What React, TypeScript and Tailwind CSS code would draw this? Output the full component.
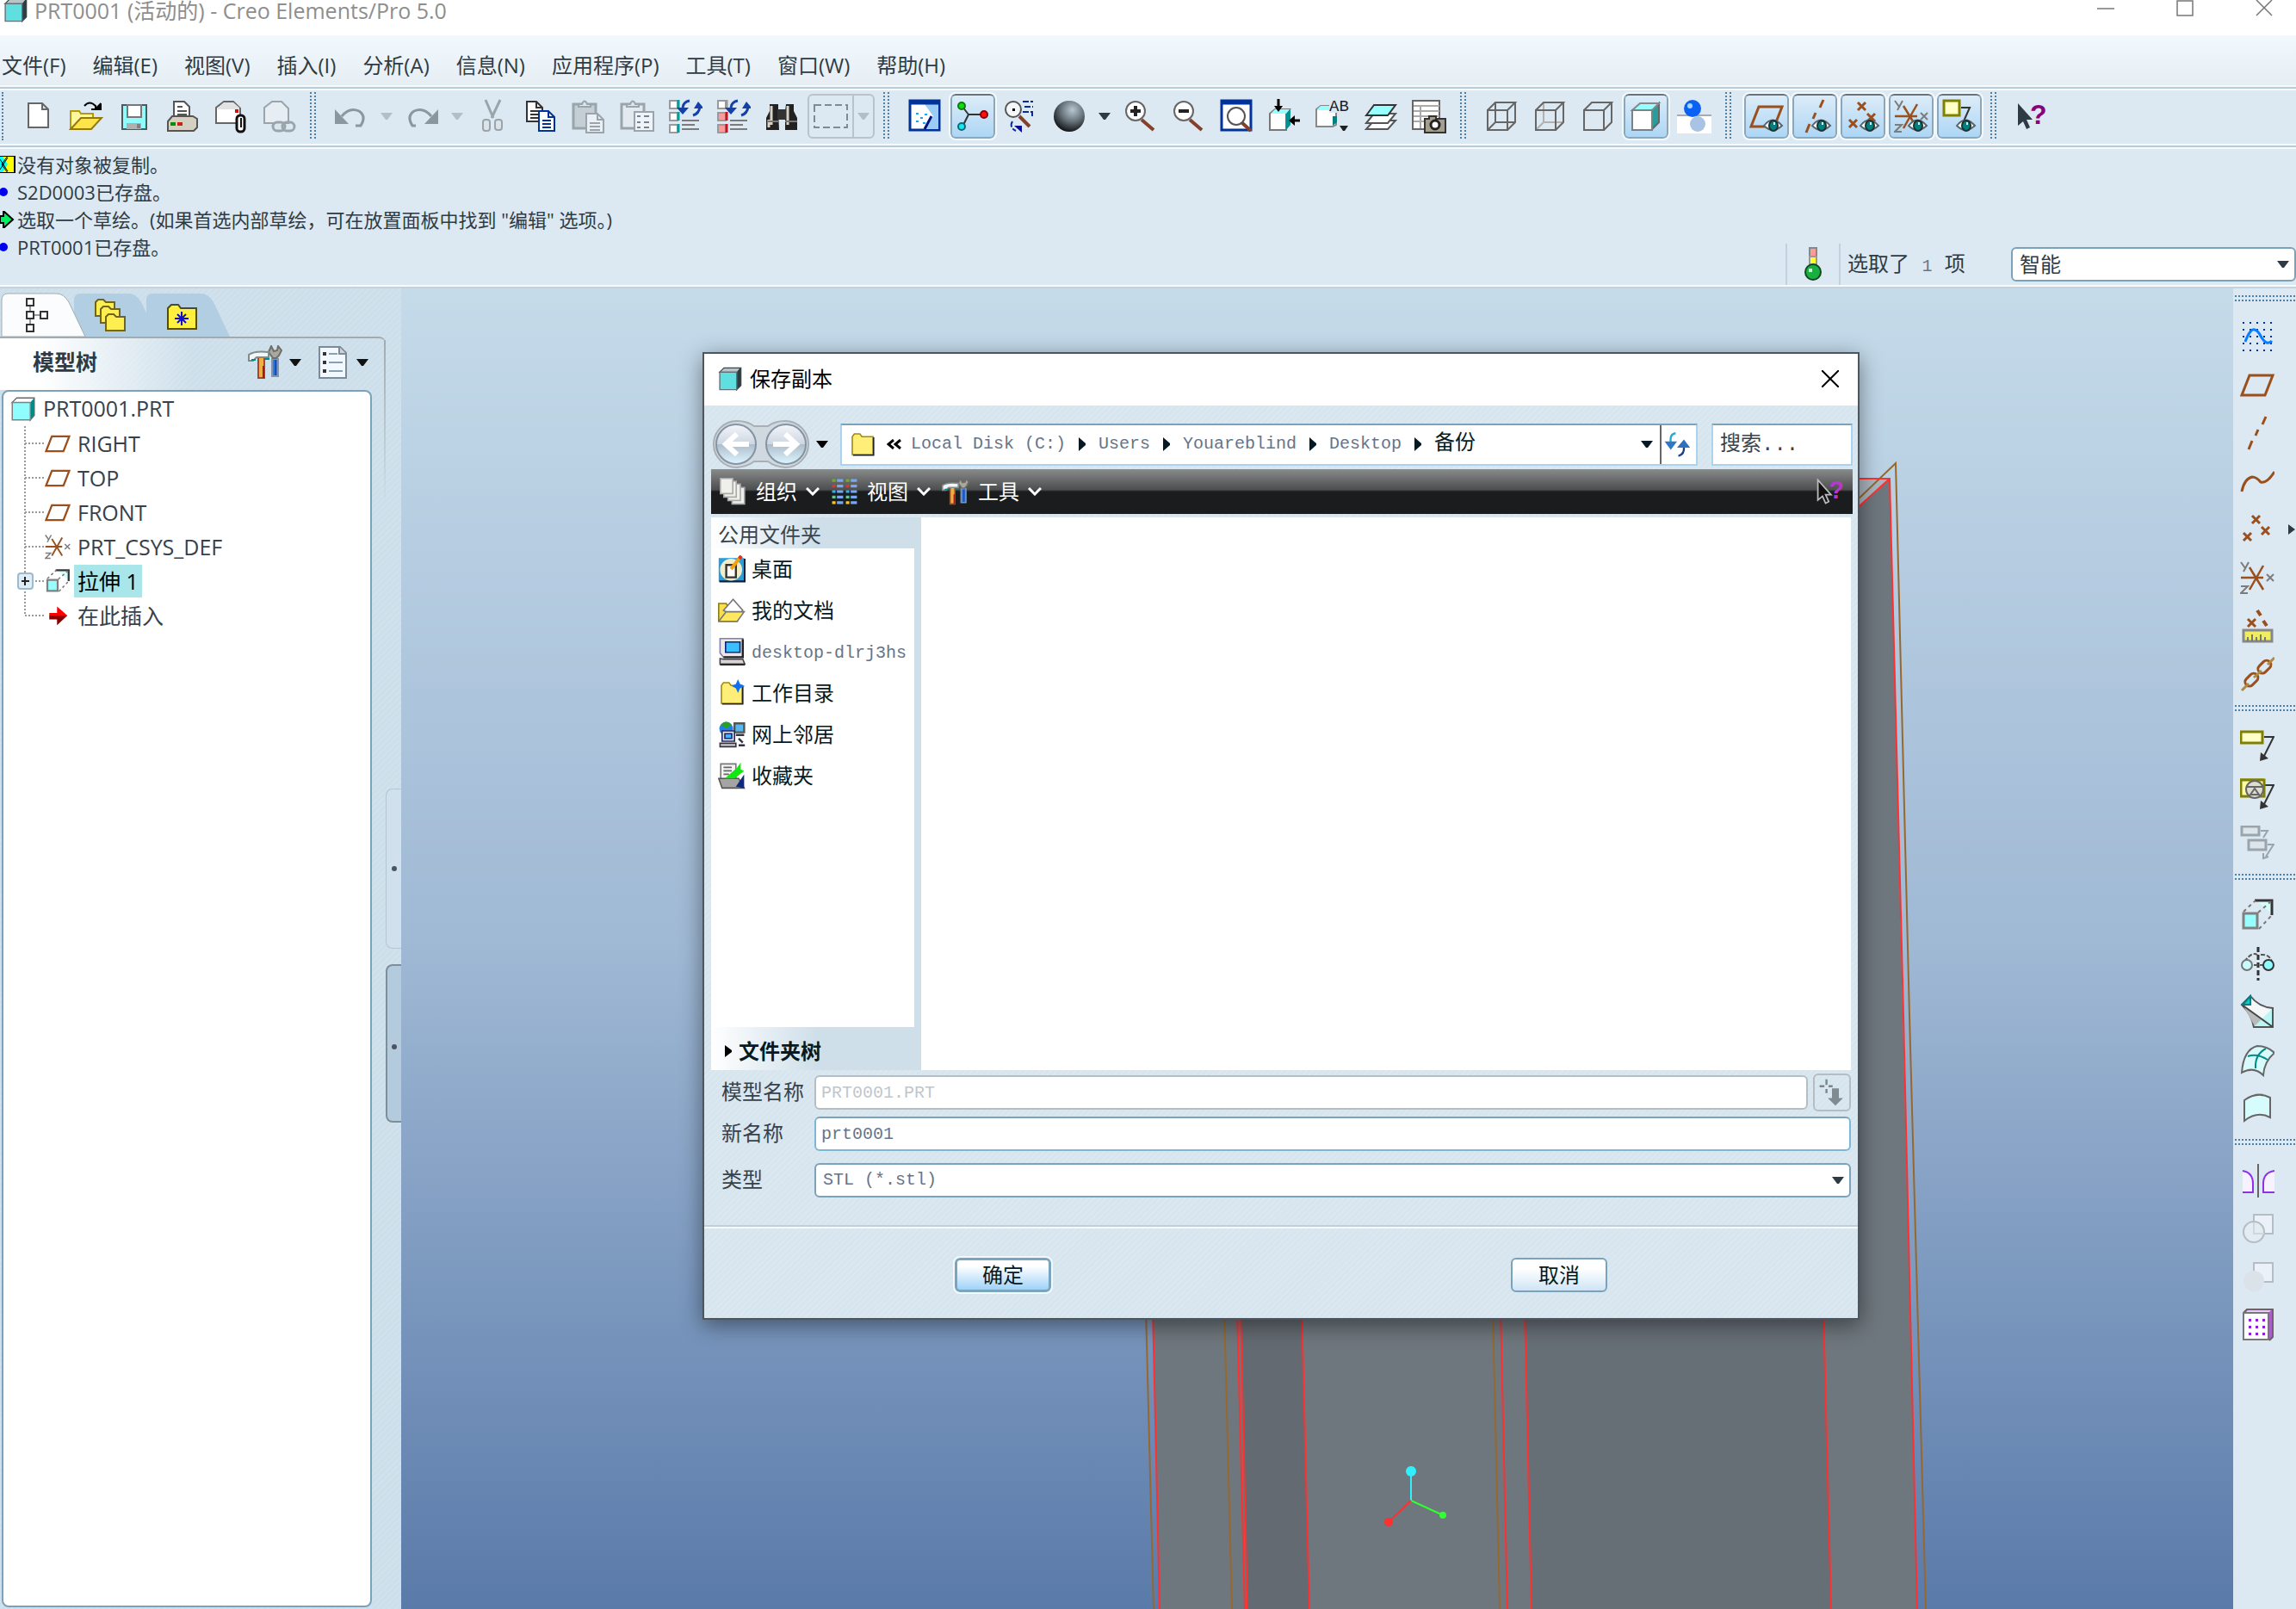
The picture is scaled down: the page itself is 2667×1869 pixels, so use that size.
import { ReactNode, useState } from 'react'

interface IconProps {
  children: ReactNode
  className?: string
}

interface Tool {
  id: string
  label: string
  icon: ReactNode
  pressed?: boolean
  disabled?: boolean
}

const BROWN = '#9a4f1c'
const GRAY = '#666666'
const FADED = '#9aa5ab'

function Icon({ children, className = 'size-10' }: IconProps) {
  return (
    <svg viewBox="0 0 40 40" fill="none" strokeWidth="2" className={`shrink-0 ${className}`} aria-hidden="true">
      {children}
    </svg>
  )
}

function Caret({ color = '#2f3b44' }: { color?: string }) {
  return (
    <svg viewBox="0 0 14 8" className="w-[14px] h-2 shrink-0" aria-hidden="true">
      <path d="M0 0H14L8 8H6Z" fill={color} />
    </svg>
  )
}

// ---- shared glyphs ----

const cube = (
  <>
    <path d="M3 10L10 3H37V30L31 37V10Z" fill="#008b8b" stroke={GRAY} />
    <path d="M4 10L10 4H36L31 10Z" fill="#ffffff" />
    <path d="M3 10H31V37H3Z" fill="#8ffdfd" stroke="#808080" />
  </>
)
// darker cube of the window captions
const captionCube = (
  <>
    <path d="M3 9L10 2H38V31L31 38V9Z" fill="#2c3c40" stroke="#3a4649" />
    <path d="M4 9L10 3H36L31 9Z" fill="#b8c4c8" />
    <path d="M3 9H31V38H3Z" fill="#5fdfdf" stroke="#5f7478" />
  </>
)
const plane = <path d="M11 9H38L29 32H2Z" stroke={BROWN} strokeWidth="3" />
const axis = <path d="M30 1L26 10M21 16L18 23M14 29L10 39" stroke={BROWN} strokeWidth="3" />
const cross = (x: number, y: number) => (
  <path key={`${x}-${y}`} d={`M${x} ${y}l9 9m0 -9l-9 9`} stroke={BROWN} strokeWidth="3" />
)
const points = [cross(14, 4), cross(4, 24), cross(25, 17)]
const csys = (
  <>
    <path d="M1 20H27M11 8L27 34M27 6L11 34" stroke={BROWN} strokeWidth="2.5" />
    <path d="M1 2L6 9M10 2L4 13M31 16L39 24M39 16L31 24M1 30H9L1 38H9" stroke="#7c7c7c" />
  </>
)
const note = (
  <>
    <path d="M1 3H26V16H1Z" fill="#ffffc8" stroke="#808000" strokeWidth="3" />
    <path d="M28 9H39L27 33" stroke="#333" />
    <path d="M24 27L23 37L33 34Z" fill="#333" />
  </>
)
const eye = (
  <>
    <path d="M17 31Q27 18 38 31Q27 41 17 31Z" fill="#ffffff" stroke="#59666b" />
    <ellipse cx="28" cy="31" rx="5" ry="6" fill="#008080" stroke="#20312f" />
    <rect x="28" y="27" width="2" height="3" fill="#c8ffff" />
  </>
)
const extrude = (
  <>
    <path d="M19 3H37V20L32 14L27 10Z" fill="#d6fbfb" />
    <path d="M17 3H37V20" stroke="#333" strokeWidth="3" />
    <path d="M4 16L18 3M21 17L36 4M22 36L37 20" stroke="#777" strokeDasharray="4 4" />
    <path d="M4 18H20V35H4Z" fill="#98ffff" stroke="#808080" strokeWidth="3" />
  </>
)
const magnifier = (sign: ReactNode) => (
  <>
    <path d="M22 24L36 36" stroke="#84402a" strokeWidth="4" />
    <circle cx="15" cy="14" r="11" fill="#ffffff" stroke="#666" />
    {sign}
  </>
)
const hammer = (
  <>
    <path d="M28 16H35V36H28Z" fill="#2f7be0" stroke="#7f95b8" />
    <path d="M32 17V35" stroke="#174fb8" />
    <path d="M27 1L30 7L34 6L35 1L39 6L36 12L33 15H29L24 8Z" fill="#a8a8a0" stroke="#6f6f68" />
    <path d="M12 14H19V38H12Z" fill="#f0b040" stroke="#a8481c" />
    <path d="M18 24V38" stroke="#a01810" />
    <path d="M1 11Q8 6 24 8V14H10L6 18H1Z" fill="#f4f6f6" stroke="#7f8c8c" />
    <path d="M4 17H9M19 16H25" stroke="#008b8b" />
  </>
)
const helpPointer = (fill: string, stroke: string, mark: string) => (
  <>
    <path d="M4 5V31L10 26L14 35L18 33L14 24H21Z" fill={fill} stroke={stroke} />
    <text x="18" y="29" fill={mark} fontSize="32" fontWeight="700" fontFamily="Liberation Sans">?</text>
  </>
)
const sheet = (x: number, y: number, w: number, h: number, color: string, fill = '#ffffff') => (
  <>
    <path d={`M${x} ${y}h${w - 7}l7 7v${h - 7}h-${w}z`} fill={fill} stroke={color} />
    <path d={`M${x + w - 7} ${y}v7h7M${x + 4} ${y + 11}h${w - 8}M${x + 4} ${y + 15}h${w - 8}M${x + 4} ${y + 19}h${w - 8}`} stroke={color} />
  </>
)
const clipboard = (fill: string) => (
  <>
    <path d="M2 6H28V34H2Z" fill={fill} stroke={FADED} strokeWidth="3" />
    <path d="M8 9H22V6H18Q15 -1 12 6H8Z" fill="#dce8f0" stroke={FADED} />
  </>
)
const regenerate = (top: string, rest: string) => (
  <>
    {[1, 15, 29].map((y, i) => (
      <g key={y}>
        <path d={`M2 ${y + 1}h9v9h-9z`} fill={i && rest !== top ? '#ff9a9a' : '#ffffff'} stroke="#9a9a9a" />
        <path d={`M12 ${y}v10`} stroke={i ? rest : top} strokeWidth="3" />
      </g>
    ))}
    <path d="M17 10Q18 3 25 2M37 9Q36 17 29 19" stroke="#1540a8" strokeWidth="3" />
    <path d="M10 10H24L17 18ZM30 11H40V9L35 3Z" fill="#1540a8" />
    <path d="M16 25H36M16 30H31M16 35H36" stroke="#7b7b7b" />
  </>
)
const wireCube = (
  <path d="M4 13H27V36H4ZM4 13L13 4H36L27 13M36 4V27L27 36" stroke={GRAY} strokeWidth="2" />
)
const windowFrame = <path d="M3 2H37V36H3Z" fill="#ffffff" stroke="#003399" strokeWidth="3" />

// ---- toolbar groups ----

const fileTools: Tool[] = [
  { id: 'new', label: '新建', icon: <path d="M9 5H25L32 12V33H9ZM25 5V12H32" fill="#fff" stroke={GRAY} /> },
  {
    id: 'open',
    label: '打开',
    icon: (
      <>
        <path d="M2 35V14H12L14 17H28V22" fill="#fff6a0" stroke="#b59a10" />
        <path d="M2 35L14 22H38L26 35Z" fill="#ffe34a" stroke="#8f7a10" />
        <path d="M18 8Q24 1 31 8V12M26 12H37V5" stroke="#000" />
        <path d="M28 13H37V4Z" fill="#000" />
      </>
    ),
  },
  {
    id: 'save',
    label: '保存',
    icon: (
      <>
        <path d="M6 7H34V35H6Z" fill="#8ffdfd" stroke="#4d5a5a" />
        <path d="M12 7H28V21H12Z" fill="#fff" stroke="#777" />
        <path d="M11 28H28V35H11Z" fill="#b0b0b0" />
        <path d="M23 29H27V34H23Z" fill="#808080" />
      </>
    ),
  },
  {
    id: 'print',
    label: '打印',
    icon: (
      <>
        <path d="M10 20V3H22L28 9V20" fill="#fff" stroke="#555" />
        <path d="M14 9H20M14 14H25M14 18H25" stroke="#555" />
        <path d="M3 26L8 20H32L37 23V33L33 37H3Z" fill="#d5d1c2" stroke="#555" />
        <path d="M6 29H12" stroke="#0a8a0a" strokeWidth="4" />
        <path d="M14 29H20" stroke="#cf2010" strokeWidth="4" />
      </>
    ),
  },
  {
    id: 'mail',
    label: '发送邮件',
    icon: (
      <>
        <path d="M3 10L12 3H23L31 11V28H3Z" fill="#fff" stroke="#666" />
        <path d="M4 12H30V10L23 4H12Z" fill="#e2e2e2" />
        <path d="M25 12H29V16H25Z" fill="#d01010" />
        <rect x="27" y="19" width="9" height="19" rx="4" fill="#fff" stroke="#111" strokeWidth="3" />
        <path d="M32 22V33" stroke="#111" />
      </>
    ),
  },
  {
    id: 'mail-link',
    label: '发送链接',
    disabled: true,
    icon: (
      <>
        <path d="M3 10L12 3H23L31 11V28H3Z" fill="#e6edf3" stroke={FADED} />
        <rect x="13" y="27" width="14" height="10" rx="5" fill="#dce6ee" stroke={FADED} strokeWidth="3" />
        <rect x="24" y="27" width="14" height="10" rx="5" stroke={FADED} strokeWidth="3" />
      </>
    ),
  },
]

const editTools: Tool[] = [
  {
    id: 'cut',
    label: '剪切',
    disabled: true,
    icon: (
      <>
        <path d="M12 1L21 22M29 1L19 22" stroke={FADED} strokeWidth="3" />
        <rect x="9" y="24" width="8" height="13" rx="3" stroke={FADED} fill="#dce4ea" />
        <rect x="23" y="24" width="8" height="12" rx="3" stroke={FADED} fill="#dce4ea" />
      </>
    ),
  },
  {
    id: 'copy',
    label: '复制',
    icon: (
      <>
        {sheet(4, 3, 18, 23, '#333')}
        {sheet(18, 14, 18, 23, '#003399')}
      </>
    ),
  },
  { id: 'paste', label: '粘贴', disabled: true, icon: <>{clipboard('#c5ced4')}{sheet(17, 17, 20, 22, FADED, '#eaf0f5')}</> },
  {
    id: 'paste-special',
    label: '选择性粘贴',
    disabled: true,
    icon: (
      <>
        {clipboard('#e2eaf0')}
        <path d="M17 15H39V37H17Z" fill="#eef4fa" stroke={FADED} />
        <path d="M20 20H24M20 27H24M20 33H24M28 20H34M28 27H34M28 33H34" stroke="#78848b" />
      </>
    ),
  },
  { id: 'regen', label: '再生', icon: regenerate('#00a0a0', '#00a0a0') },
  { id: 'regen-mgr', label: '再生管理器', icon: regenerate('#999999', '#d01020') },
  {
    id: 'find',
    label: '查找',
    icon: (
      <>
        <path d="M6 6H16V14L17 36H2V22L6 14ZM25 6H34V14L38 22V36H24V14Z" fill="#222" />
        <path d="M8 8V30M5 24V33M27 8V30" stroke="#d8d4c4" strokeWidth="3" />
        <path d="M15 12H25V24H15Z" fill="#333" />
        <path d="M3 26H17M24 26H38" stroke="#777" />
      </>
    ),
  },
]

const viewTools: Tool[] = [
  {
    id: 'repaint',
    label: '重画',
    icon: (
      <>
        {windowFrame}
        <path d="M20 6H36V35H21L30 20Z" fill="#9bcdf4" />
        <path d="M2 4H38" stroke="#003399" strokeWidth="5" />
        <path d="M28 20L20 35" stroke="#00157f" strokeWidth="3" />
        <path d="M10 17H13M15 22H18M10 26H13M20 18H23M18 28H21" stroke="#1ba4f0" />
      </>
    ),
  },
  {
    id: 'spin-center',
    label: '旋转中心',
    pressed: true,
    icon: (
      <>
        <path d="M8 9L15 18L8 32M15 18H32" stroke="#333" />
        <circle cx="7" cy="8" r="4" fill="#0be00b" stroke="#117711" />
        <circle cx="7" cy="32" r="4" fill="#17e8f5" stroke="#086a73" />
        <circle cx="33" cy="18" r="4" fill="#ff1010" stroke="#8a0000" />
      </>
    ),
  },
  {
    id: 'orient-mode',
    label: '定向模式',
    icon: (
      <>
        <path d="M18 20L30 32" stroke="#84402a" strokeWidth="4" />
        <circle cx="11" cy="12" r="9" fill="#f4f8fb" stroke="#555" />
        <rect x="10" y="11" width="3" height="3" fill="#000" />
        <path d="M22 3H34M24 9H34M22 15H33V21M10 26Q6 33 14 37" stroke="#0a2a98" strokeDasharray="7 2" />
        <path d="M12 31H21V39Z" fill="#0a0a98" />
      </>
    ),
  },
  {
    id: 'appearance',
    label: '外观库',
    icon: (
      <>
        <defs>
          <radialGradient id="ball" cx="0.6" cy="0.3" r="0.7">
            <stop offset="0" stopColor="#b9c6d0" />
            <stop offset="0.5" stopColor="#6c7880" />
            <stop offset="1" stopColor="#15181b" />
          </radialGradient>
        </defs>
        <circle cx="20" cy="20" r="18" fill="url(#ball)" />
      </>
    ),
  },
]

const zoomTools: Tool[] = [
  { id: 'zoom-in', label: '放大', icon: magnifier(<path d="M9 14H21M15 8V20" stroke="#222" strokeWidth="4" />) },
  { id: 'zoom-out', label: '缩小', icon: magnifier(<path d="M9 14H21" stroke="#222" strokeWidth="4" />) },
  {
    id: 'refit',
    label: '重新调整',
    icon: (
      <>
        {windowFrame}
        <path d="M2 4H38" stroke="#003399" strokeWidth="5" />
        <path d="M25 26L37 37" stroke="#84402a" strokeWidth="4" />
        <circle cx="20" cy="20" r="10" fill="#fff" stroke="#555" />
      </>
    ),
  },
  {
    id: 'reorient',
    label: '重定向',
    icon: (
      <>
        <path d="M3 17L9 12H26L22 17V36H3Z" fill="#fff" stroke="#777" />
        <path d="M4 17L9 12H26L22 17Z" fill="#98ffff" />
        <path d="M22 17L27 12V30L22 36Z" fill="#009090" />
        <path d="M13 0V10M28 25H38" stroke="#000" strokeWidth="3" />
        <path d="M8 8H18L13 15ZM32 19V31L25 25Z" fill="#000" />
      </>
    ),
  },
  {
    id: 'saved-views',
    label: '已命名视图',
    icon: (
      <>
        <path d="M1 12L6 8H24V30L20 32H1Z" fill="#fff" stroke="#888" />
        <path d="M2 12L6 8H20L18 13H2Z" fill="#98ffff" />
        <path d="M20 20V31L25 27V20Z" fill="#008080" />
        <path d="M16 0H38V16H16Z" fill="#dce9f2" />
        <text x="16" y="14" fill="#222" fontSize="19" fontFamily="Liberation Mono" stroke="none">AB</text>
        <path d="M28 31H38L34 37H32Z" fill="#222" />
      </>
    ),
  },
  {
    id: 'layers',
    label: '层',
    icon: (
      <>
        <path d="M3 35L12 25H37L28 35Z" fill="#fff" stroke="#555" />
        <path d="M3 28L12 17H37L28 28Z" fill="#fff" stroke="#555" />
        <path d="M3 19L12 7H37L28 19Z" fill="#98ffff" stroke="#333" />
      </>
    ),
  },
  {
    id: 'view-manager',
    label: '视图管理器',
    icon: (
      <>
        <path d="M1 2H32V35H1Z" fill="#fff" stroke="#666" />
        <path d="M2 8H32M2 14H32M2 20H32M2 26H16M10 8V34" stroke="#aaa" />
        <path d="M15 23H20V20H28V23H39V39H15Z" fill="#a49f8c" stroke="#333" />
        <circle cx="27" cy="30" r="5" fill="#fff" stroke="#222" strokeWidth="3" />
      </>
    ),
  },
]

const displayTools: Tool[] = [
  { id: 'wireframe', label: '线框', icon: <>{wireCube}<path d="M13 4V27H36M13 27L4 36" stroke={GRAY} /></> },
  { id: 'hidden-line', label: '隐藏线', icon: <><path d="M13 4V27H36M13 27L4 36" stroke="#b4b0ae" />{wireCube}</> },
  { id: 'no-hidden', label: '消隐', icon: wireCube },
  {
    id: 'shading',
    label: '着色',
    pressed: true,
    icon: (
      <>
        <path d="M27 13L35 5V27L27 35Z" fill="#2a9c9c" stroke="#666" />
        <path d="M4 13L13 5H35L27 13Z" fill="#98ffff" stroke="#888" />
        <path d="M4 13H27V36H4Z" fill="#fff" stroke="#808080" />
      </>
    ),
  },
  {
    id: 'realism',
    label: '增强的真实感',
    icon: (
      <>
        <path d="M0 19H40V40H0Z" fill="#fff" />
        <path d="M0 19H40" stroke="#aaa" />
        <circle cx="24" cy="29" r="9" fill="#a9c3e4" />
        <circle cx="18" cy="11" r="10" fill="#0a62f5" />
        <circle cx="15" cy="8" r="3" fill="#a8d8ff" />
      </>
    ),
  },
]

const datumTools: Tool[] = [
  { id: 'planes', label: '平面显示', pressed: true, icon: <>{plane}{eye}</> },
  { id: 'axes', label: '轴显示', pressed: true, icon: <>{axis}{eye}</> },
  { id: 'points', label: '点显示', pressed: true, icon: <>{points}{eye}</> },
  { id: 'csys', label: '坐标系显示', pressed: true, icon: <>{csys}{eye}</> },
  {
    id: 'notes',
    label: '注释显示',
    pressed: true,
    icon: (
      <>
        <path d="M2 2H20V19H2Z" fill="#ffffc8" stroke="#808000" strokeWidth="3" />
        <path d="M22 10H32L24 28" stroke="#333" />
        {eye}
      </>
    ),
  },
]

// ---- feature toolbar on the right edge ----

const gridDots = [3, 11, 19, 27, 35]
const sideGroups: Tool[][] = [
  [
    {
      id: 'sketch',
      label: '草绘',
      icon: (
        <>
          {gridDots.map((x) => gridDots.map((y) => <rect key={`${x}-${y}`} x={x} y={y} width="2" height="2" fill="#003399" />))}
          <path d="M6 26Q12 10 17 12Q21 13 25 21Q31 31 37 25" stroke="#0a7dff" strokeWidth="3" />
        </>
      ),
    },
    { id: 'plane', label: '平面', icon: plane },
    { id: 'axis', label: '轴', icon: axis },
    { id: 'curve', label: '曲线', icon: <path d="M2 32Q5 17 14 15Q19 15 24 21Q31 23 40 9" stroke={BROWN} strokeWidth="3" /> },
    { id: 'point', label: '点', icon: points },
    { id: 'csys', label: '坐标系', icon: csys },
    {
      id: 'field',
      label: '分析',
      icon: (
        <>
          {cross(9, 12)}
          <path d="M20 2L24 8M27 14L31 20" stroke={BROWN} strokeWidth="4" />
          <path d="M4 25H37V38H4Z" fill="#eeee60" stroke="#888" strokeWidth="3" />
          <path d="M9 38V33M14 38V30M19 38V33M24 38V30M29 38V33" stroke="#777" />
        </>
      ),
    },
    {
      id: 'reference',
      label: '参照',
      icon: (
        <>
          <rect x="-8" y="-5" width="17" height="10" rx="5" transform="translate(13 27) rotate(-45)" stroke={BROWN} strokeWidth="3" />
          <rect x="-8" y="-5" width="17" height="10" rx="5" transform="translate(28 12) rotate(-45)" stroke={BROWN} strokeWidth="3" />
          <path d="M2 39L10 31M16 24L25 16M32 9L40 1" stroke="#b08a40" strokeWidth="3" />
        </>
      ),
    },
  ],
  [
    { id: 'note', label: '注释', icon: note },
    {
      id: 'note-stamp',
      label: '传播注释',
      icon: (
        <>
          {note}
          <path d="M1 3H28V22H1Z" fill="#ffffa8" stroke="#808000" strokeWidth="3" />
          <circle cx="17" cy="14" r="10" fill="#dedbd0" stroke="#666" />
          <path d="M7 11H27M12 20L17 13L22 20Z" stroke="#666" />
        </>
      ),
    },
    {
      id: 'note-copy',
      label: '复制注释',
      disabled: true,
      icon: (
        <>
          <path d="M2 1H22V11H2ZM10 17H30V28H10Z" fill="#dce5ec" stroke={FADED} strokeWidth="3" />
          <path d="M24 6H32L27 14M32 22H39L30 36M27 32V38L33 36" stroke={FADED} />
        </>
      ),
    },
  ],
  [
    { id: 'extrude', label: '拉伸', icon: extrude },
    {
      id: 'revolve',
      label: '旋转',
      icon: (
        <>
          <path d="M21 1V40" stroke="#333" strokeWidth="3" strokeDasharray="6 3" />
          <path d="M5 18Q14 6 20 10M24 10Q34 9 37 18M16 22H28" stroke="#555" strokeDasharray="5 2" />
          <circle cx="8" cy="22" r="6" fill="#c8fbfb" stroke="#777" />
          <circle cx="33" cy="22" r="6" fill="#8ffdfd" stroke="#333" />
        </>
      ),
    },
    {
      id: 'sweep',
      label: '扫描混合',
      icon: (
        <>
          <path d="M2 12L12 2Q22 15 38 16V38H16Q14 24 2 12Z" fill="#f4f8f8" stroke="#555" />
          <path d="M3 12L17 37L25 30Z" fill="#b8bbbb" />
          <path d="M37 17L17 37H37Z" fill="#baf6f6" />
          <path d="M2 12L38 38" stroke="#444" />
          <path d="M3 12L12 2V12Z" fill="#10c8c8" stroke="#087c7c" />
        </>
      ),
    },
    {
      id: 'boundary',
      label: '边界混合',
      icon: (
        <>
          <path d="M2 35Q4 8 20 4Q32 4 40 12Q28 22 27 38Q16 27 2 35Z" fill="#d8fafa" stroke="#666" />
          <path d="M30 7Q17 14 18 30M9 16Q20 12 32 20" stroke="#008b8b" />
        </>
      ),
    },
    {
      id: 'style',
      label: '造型',
      icon: <path d="M5 35V11Q20 0 35 8V31Q20 23 5 35Z" fill="#d6fcfc" stroke="#666" />,
    },
  ],
  [
    {
      id: 'mirror',
      label: '镜像',
      icon: (
        <>
          <path d="M21 1V40" stroke="#666" />
          <path d="M3 9Q15 11 15 24V34H3M40 9Q27 11 27 24V34H40" fill="#f6f2ff" stroke="#9030e8" />
        </>
      ),
    },
    {
      id: 'merge',
      label: '合并',
      disabled: true,
      icon: (
        <>
          <path d="M16 4H38V26H16Z" fill="#eaf1f8" stroke="#b4bdc4" />
          <circle cx="16" cy="24" r="12" fill="#e4ecf3" stroke="#b4bdc4" />
          <path d="M16 13V26H28" stroke="#cfd7dd" />
        </>
      ),
    },
    {
      id: 'trim',
      label: '修剪',
      disabled: true,
      icon: (
        <>
          <path d="M16 4H38V26H16Z" fill="#eaf1f8" stroke="#b4bdc4" />
          <circle cx="16" cy="25" r="12" fill="#dbe2e9" />
        </>
      ),
    },
    {
      id: 'pattern',
      label: '阵列',
      icon: (
        <>
          <path d="M4 6L8 2H38V34L34 38" fill="#a85fc8" stroke="#666" />
          <path d="M6 6L9 3H36L33 6Z" fill="#f0c8ff" />
          <path d="M4 6H33V37H4Z" fill="#fff" stroke="#777" />
          {[10, 18, 26].map((x) => [13, 21, 29].map((y) => <rect key={`${x}-${y}`} x={x} y={y} width="3" height="3" fill="#9020d8" />))}
        </>
      ),
    },
  ],
]

const menus = ['文件(F)', '编辑(E)', '视图(V)', '插入(I)', '分析(A)', '信息(N)', '应用程序(P)', '工具(T)', '窗口(W)', '帮助(H)']

const treeNodes = [
  { name: 'RIGHT', icon: plane },
  { name: 'TOP', icon: plane },
  { name: 'FRONT', icon: plane },
  { name: 'PRT_CSYS_DEF', icon: csys },
  { name: '拉伸 1', icon: extrude, expandable: true, selected: true },
  { name: '在此插入', icon: <><path d="M7 16H19V6L35 20H7Z" fill="#f00" /><path d="M7 20H35L19 35V26H7Z" fill="#8a0000" /></> },
]

const folder = (
  <>
    <path d="M5 35V9L8 5H16L19 9H35V35Z" fill="#ffee78" stroke="#a08a10" />
    <path d="M36 10V36H6" stroke="#222" strokeWidth="2" />
  </>
)

const places = [
  {
    name: '桌面',
    icon: (
      <>
        <path d="M1 4H38V38H1Z" fill="#2a9ed8" />
        <path d="M2 38H39V5" stroke="#0a2040" strokeWidth="3" />
        <circle cx="19" cy="21" r="16" fill="#f2edc8" />
        <path d="M12 14H26V32H12Z" fill="#fff" stroke="#333" strokeWidth="3" />
        <path d="M19 20L33 2" stroke="#f0a010" strokeWidth="5" />
        <path d="M31 5L34 1" stroke="#e03020" strokeWidth="5" />
      </>
    ),
  },
  {
    name: '我的文档',
    icon: (
      <>
        <path d="M1 36V10H12L14 14H28V36Z" fill="#f8e050" stroke="#8a7a20" />
        <path d="M8 20L22 4L36 20L26 30Z" fill="#fff" stroke="#777" />
        <path d="M1 36L12 22H38L28 36Z" fill="#ffe860" stroke="#777" />
      </>
    ),
  },
  {
    name: 'desktop-dlrj3hs',
    mono: true,
    icon: (
      <>
        <path d="M3 1H36V28H8L3 22Z" fill="#ece8e0" stroke="#8080b0" />
        <path d="M36 2V28H8" stroke="#222" strokeWidth="3" />
        <path d="M11 6H32V21H11Z" fill="#38c0ff" stroke="#102080" />
        <path d="M8 31H36L39 38H3V30Z" fill="#d8d4d8" stroke="#444" />
        <path d="M3 39H39" stroke="#222" />
      </>
    ),
  },
  { name: '工作目录', icon: <>{folder}<path d="M29 0L32 7L39 10L32 13L29 20L26 13L20 10L26 7Z" fill="#1070f0" /></> },
  {
    name: '网上邻居',
    icon: (
      <>
        <circle cx="12" cy="12" r="10" fill="#2080e8" />
        <path d="M4 6Q12 -2 20 6L12 12Z" fill="#28a020" />
        <path d="M24 4H38V17H24Z" fill="#58b8f0" stroke="#555" strokeWidth="3" />
        <path d="M6 15H24V30H6Z" fill="#e8e4dc" stroke="#202868" />
        <path d="M10 19H20V26H10Z" fill="#38b8f8" stroke="#102080" />
        <path d="M3 33H26V38H3Z" fill="#d0ccc8" stroke="#334" />
        <path d="M26 21H38M30 26L36 32M30 36H39" stroke="#334" strokeWidth="3" />
      </>
    ),
  },
  {
    name: '收藏夹',
    icon: (
      <>
        <path d="M4 3H26V30H4Z" fill="#f4f4f4" stroke="#777" />
        <path d="M8 8H20M8 13H20M8 18H16" stroke="#666" />
        <path d="M1 24H30L38 38H6Z" fill="#a4a4a4" stroke="#555" />
        <path d="M26 36L38 18V38Z" fill="#102880" />
        <path d="M10 24L28 8L33 1V11L38 13L24 24Z" fill="#10e810" />
      </>
    ),
  },
]

function ToolButton({ tool }: { tool: Tool }) {
  const look = tool.pressed
    ? 'border-2 border-[#8fa6b8] border-t-[#66747f] outline-2 outline-[#f2f9fd] bg-linear-to-b from-[#dcecf8] to-[#add6f5]'
    : ''
  return (
    <button
      type="button"
      aria-label={tool.label}
      title={tool.label}
      disabled={tool.disabled}
      className={`mx-0.5 flex size-[52px] shrink-0 items-center justify-center rounded-md ${look}`}
    >
      <Icon>{tool.icon}</Icon>
    </button>
  )
}

function Grip({ horizontal }: { horizontal?: boolean }) {
  return horizontal ? (
    <div className="mt-2 mb-3 ml-0.5 flex h-2 flex-col gap-[3px]">
      <div className="h-[2px] bg-[repeating-linear-gradient(90deg,#4f7fa3_0px,#4f7fa3_2px,transparent_2px,transparent_4px)]" />
      <div className="h-[2px] bg-[repeating-linear-gradient(90deg,#4f7fa3_0px,#4f7fa3_2px,transparent_2px,transparent_4px)]" />
    </div>
  ) : (
    <div className="ml-2 mr-3 flex h-14 w-2 shrink-0 gap-[3px]">
      <div className="w-[2px] bg-[repeating-linear-gradient(180deg,#4f7fa3_0px,#4f7fa3_2px,transparent_2px,transparent_4px)]" />
      <div className="w-[2px] bg-[repeating-linear-gradient(180deg,#4f7fa3_0px,#4f7fa3_2px,transparent_2px,transparent_4px)]" />
    </div>
  )
}

function Rule() {
  return <div className="h-1.5 shrink-0 border-y-2 border-[#f6fafd] bg-[#b7ccdb]" />
}

function TitleBar() {
  return (
    <header className="flex h-[41px] shrink-0 items-start justify-between bg-white pr-[27px]">
      <div className="flex h-6 items-center">
        <Icon className="ml-1 size-7">{captionCube}</Icon>
        <h1 className="ml-2 text-[25px] leading-6 text-[#8e8e8e]">PRT0001 (活动的) - Creo Elements/Pro 5.0</h1>
      </div>
      <div className="flex gap-[72px] text-[#777]">
        {[
          { label: '最小化', d: 'M0 10H20' },
          { label: '最大化', d: 'M1 1H19V18H1Z' },
          { label: '关闭', d: 'M1 0L19 18M19 0L1 18' },
        ].map((b) => (
          <button key={b.label} type="button" aria-label={b.label}>
            <svg viewBox="0 0 20 20" fill="none" stroke="currentColor" strokeWidth="1.5" className="size-5">
              <path d={b.d} />
            </svg>
          </button>
        ))}
      </div>
    </header>
  )
}

function MainToolbar() {
  return (
    <div className="flex h-[62px] shrink-0 items-center pb-0.5">
      <div className="mr-3 h-14 w-1 border-r-2 border-dotted border-[#4f7fa3]" />
      {fileTools.map((tool) => <ToolButton key={tool.id} tool={tool} />)}
      <Grip />
      <button type="button" aria-label="撤消" disabled className="flex w-14 justify-center">
        <Icon><path d="M9 20Q18 9 29 14Q38 20 31 31H25" stroke="#8b979e" strokeWidth="3" /><path d="M1 12V29H17Z" fill="#8b979e" /></Icon>
      </button>
      <button type="button" aria-label="撤消列表" disabled className="flex w-[26px] justify-center"><Caret color="#b3bfc7" /></button>
      <button type="button" aria-label="重做" disabled className="flex w-14 justify-center">
        <Icon><path d="M31 20Q22 9 11 14Q2 20 9 31H13" stroke="#8b979e" strokeWidth="3" /><path d="M39 12V29H23Z" fill="#8b979e" /></Icon>
      </button>
      <button type="button" aria-label="重做列表" disabled className="flex w-[26px] justify-center"><Caret color="#b3bfc7" /></button>
      {editTools.map((tool) => <ToolButton key={tool.id} tool={tool} />)}
      <button type="button" aria-label="选取框" disabled className="mx-0.5 flex h-[52px] w-[78px] shrink-0 items-center rounded-md border-2 border-[#b9c3ca]">
        <span className="flex h-full w-[52px] items-center justify-center border-r-2 border-[#b9c3ca]">
          <Icon><path d="M1 7H39V33H1Z" stroke="#7f8b92" strokeDasharray="8 4" /></Icon>
        </span>
        <span className="flex flex-1 justify-center"><Caret color="#b3bfc7" /></span>
      </button>
      <Grip />
      {viewTools.map((tool) => <ToolButton key={tool.id} tool={tool} />)}
      <button type="button" aria-label="外观列表" className="flex w-[26px] justify-center"><Caret /></button>
      {zoomTools.map((tool) => <ToolButton key={tool.id} tool={tool} />)}
      <Grip />
      {displayTools.map((tool) => <ToolButton key={tool.id} tool={tool} />)}
      <Grip />
      {datumTools.map((tool) => <ToolButton key={tool.id} tool={tool} />)}
      <Grip />
      <ToolButton tool={{ id: 'help', label: '上下文帮助', icon: helpPointer('#2f3b44', 'none', '#86007f') }} />
    </div>
  )
}

function MessageArea() {
  const bullet = <circle cx="4" cy="10" r="5" fill="#0000f0" />
  const messages = [
    { text: '没有对象被复制。', icon: <><path d="M0 0H17V20H0Z" fill="#ffff00" stroke="#000" strokeWidth="2" /><path d="M0 1H3L9 10L3 19H0Z" fill="#00ffff" /><path d="M9 0L2 10L9 20M0 4L9 18M0 16L9 2" fill="none" stroke="#000" /></> },
    { text: 'S2D0003已存盘。', icon: bullet },
    { text: '选取一个草绘。(如果首选内部草绘，可在放置面板中找到 "编辑" 选项。)', icon: <path d="M0 6H4V0L15 10L4 20V14H0Z" fill="#00f060" stroke="#000" strokeWidth="2" /> },
    { text: 'PRT0001已存盘。', icon: bullet },
  ]
  return (
    <div className="flex h-[158px] shrink-0 justify-between">
      <ul className="pt-0.5">
        {messages.map((m) => (
          <li key={m.text} className="flex h-8 items-center gap-0.5 text-[22px]">
            <svg viewBox="0 0 18 20" className="h-5 w-[18px]" aria-hidden="true">{m.icon}</svg>
            <span className="whitespace-nowrap">{m.text}</span>
          </li>
        ))}
      </ul>
      <div className="flex items-center self-end">
        <div className="flex h-12 w-16 items-center justify-center border-x-2 border-[#c3d1dc]">
          <Icon>
            <path d="M16 1H24V11H16Z" fill="#ff9a9a" stroke="#888" />
            <path d="M16 11H24V20H16Z" fill="#ffff30" stroke="#999" />
            <circle cx="20" cy="29" r="9" fill="#18b040" stroke="#124a20" />
            <path d="M15 25H19V29H15Z" fill="#c8ffd0" />
          </Icon>
        </div>
        <p className="ml-2 w-[190px] pt-1 font-['Liberation_Mono','Noto_Sans_CJK_SC',monospace] text-2xl">
          选取了 <span className="text-xl text-[#66758a]">1</span> 项
        </p>
        <Dropdown label="选择过滤器" value="智能" className="h-10 w-[331px] text-2xl" />
      </div>
    </div>
  )
}

function Dropdown({ id, label, value, className }: { id?: string; label?: string; value: string; className: string }) {
  return (
    <div className={`relative ${className}`}>
      <select id={id} aria-label={label} className="size-full appearance-none rounded-md border-2 border-[#7aa2ba] bg-white pl-2">
        <option>{value}</option>
      </select>
      <span className="pointer-events-none absolute inset-y-0 right-2 flex items-center"><Caret /></span>
    </div>
  )
}

function ModelTree() {
  const tabs = [
    {
      label: '模型树',
      icon: (
        <g transform="translate(13 5)" fill="#fff" stroke="#333" strokeWidth="2">
          <path d="M20 9V16M20 24V31M24 20H32" stroke="#999" />
          <path d="M16 1H24V9H16ZM16 16H24V24H16ZM16 31H24V39H16ZM32 16H40V24H32Z" />
        </g>
      ),
    },
    {
      label: '文件夹浏览器',
      icon: (
        <g transform="translate(21 5)" fill="#ffee50" stroke="#6f6420" strokeWidth="2">
          <path d="M4 21V5L7 2H13L16 5H26V21Z" />
          <path d="M10 29V13L13 10H19L22 13H32V29Z" />
          <path d="M16 38V22L19 19H25L28 22H38V38Z" />
        </g>
      ),
    },
    {
      label: '收藏夹',
      icon: (
        <g transform="translate(21 5)" strokeWidth="2">
          <path d="M4 36V12L8 8H16L19 12H37V36Z" fill="#fff040" stroke="#4f4a20" />
          <path d="M20 16V32M12 24H28M15 19L25 29M25 19L15 29" stroke="#1010d0" />
        </g>
      ),
    },
  ]
  return (
    <aside className="flex w-[466px] shrink-0 bg-[repeating-linear-gradient(135deg,#cddfea_0px,#cddfea_3px,#d5e4ee_4px,#cddfea_5px)]">
      <div className="flex w-[432px] flex-col">
        <div className="flex h-14 items-end pl-0.5" role="tablist">
          {tabs.map((tab, i) => (
            <button key={tab.label} type="button" role="tab" aria-selected={i === 0} aria-label={tab.label} className={`w-[84px] ${i === 0 ? 'relative z-10' : ''}`}>
              <svg viewBox="0 0 84 50" className="h-[50px] w-[84px] overflow-visible">
                <path d="M0 50V8Q0 0 7 0H64Q72 0 78 10L97 50Z" fill={i === 0 ? '#fbfcfd' : '#b2cee2'} stroke={i === 0 ? '#a3abaf' : 'none'} />
                {tab.icon}
              </svg>
            </button>
          ))}
        </div>
        <div className="-mr-4 flex h-[62px] shrink-0 items-center rounded-tr-lg border-t-2 border-[#a3abaf] bg-linear-to-r from-white from-10% to-transparent to-50% pl-[38px] pr-5 pb-1">
          <h2 className="flex-1 text-[25px] font-bold">模型树</h2>
          <button type="button" aria-label="设置" className="flex items-center gap-2"><Icon>{hammer}</Icon><Caret color="#111" /></button>
          <button type="button" aria-label="显示" className="ml-4 flex items-center gap-2">
            <Icon>
              <path d="M5 2H29L36 9V38H5Z" fill="#f2f8ff" stroke="#7d8a98" />
              <path d="M28 2V10H36" fill="#cfd4da" stroke="#7d8a98" />
              <path d="M16 10H26M16 20H32M16 30H32" stroke="#8aa0b0" />
              <path d="M9 10H13M9 20H13M9 30H13" stroke="#333" strokeWidth="4" />
            </Icon>
            <Caret color="#111" />
          </button>
        </div>
        <div className="mb-0.5 ml-0.5 flex-1 rounded-lg border-2 border-[#7aa2ba] bg-white text-[25px] text-[#37414c]">
          <div className="flex h-10 items-center pl-2"><Icon className="size-[30px]">{cube}</Icon><span className="ml-2">PRT0001.PRT</span></div>
          <ul>
            {treeNodes.map((node, i) => (
              <li key={node.name} className="flex h-10 items-center pl-4">
                <svg viewBox="0 0 32 40" className="h-10 w-8 shrink-0" aria-hidden="true">
                  <path d={i === treeNodes.length - 1 ? 'M9 0V20H32' : 'M9 0V40M9 20H32'} fill="none" stroke="#9a9a9a" strokeWidth="2" strokeDasharray="2 2" />
                  {node.expandable && (
                    <>
                      <rect x="1" y="11" width="17" height="18" rx="3" fill="#dfedf7" stroke="#9dbace" strokeWidth="2" />
                      <path d="M5 20H14M9 15V25" stroke="#222" strokeWidth="2" />
                    </>
                  )}
                </svg>
                <Icon className="size-[30px]">{node.icon}</Icon>
                <span className={`ml-1 px-1 leading-[38px] ${node.selected ? 'bg-[#a8e6e9] text-black' : ''}`}>{node.name}</span>
              </li>
            ))}
          </ul>
        </div>
      </div>
      <div className="ml-[14px] mt-[60px] h-48 w-0.5 bg-linear-to-b from-[#a3abaf] to-transparent" />
      <div className="flex flex-1 flex-col justify-center gap-[18px] pt-4">
        <div className="flex h-[186px] items-center justify-center rounded-l-lg border border-r-0 border-[#b3c6d4] bg-[#d0e0ec]"><span className="size-1.5 rounded-full bg-[#4a5560]" /></div>
        <div className="flex h-[184px] items-center justify-center rounded-l-lg border-2 border-r-0 border-[#7e8f9c] bg-[#b4cbdd] pt-2"><span className="size-1.5 rounded-full bg-[#4a5560]" /></div>
      </div>
    </aside>
  )
}

// Extruded part with its datum plane outlines, in model space of the graphics window
function Model() {
  return (
    <svg viewBox="466 335 2128 1534" preserveAspectRatio="xMinYMin slice" className="absolute inset-0 size-full" fill="none" strokeWidth="2" aria-hidden="true">
      <path d="M1316 555H2195L2227 1869H1347Z" fill="#6e777d" />
      <path d="M2130 555H2195L2130 615Z" fill="#aab5bd" />
      <path d="M1441 1500L1449 1869H1521L1512 1500Z" fill="#636a71" />
      <path d="M1771 1500L1779 1869H2127L2118 1500Z" fill="#676f76" />
      <path d="M2130 607L2202 538L2218 1180L2237 1869M1331 1520L1340 1869M1422 1520L1431 1869M1734 1520L1742 1869" stroke="#96682f" />
      <path
        d="M2130 556H2195L2211 1180L2227 1869M2195 556L2130 615M1339 1520L1347 1869M1437 1520L1446 1869M1441 1520L1449 1869M1512 1520L1521 1869M1743 1520L1751 1869M1771 1520L1779 1869M2118 1520L2127 1869"
        stroke="#ff3030"
      />
      <path d="M1639 1743V1709" stroke="#30f0ff" />
      <path d="M1639 1743L1676 1760" stroke="#30ff30" />
      <path d="M1639 1743L1613 1768" stroke="#ff3030" />
      <circle cx="1639" cy="1709" r="6" fill="#30f0ff" />
      <circle cx="1676" cy="1760" r="4" fill="#30ff30" />
      <circle cx="1613" cy="1768" r="5" fill="#ff3030" />
    </svg>
  )
}

function SaveCopyDialog() {
  const [newName, setNewName] = useState('prt0001')
  const crumbs = ['Local Disk (C:)', 'Users', 'Youareblind', 'Desktop', '备份']
  const arrow = (
    <svg viewBox="0 0 8 16" className="mx-[15px] h-4 w-2 shrink-0" aria-hidden="true"><path d="M0 0L8 7V9L0 16Z" fill="#051a22" /></svg>
  )
  const stack = (
    <g fill="#f0f0ea" stroke="#aaa">
      <path d="M18 14H36V38H18Z" />
      <path d="M12 9H30V33H12Z" />
      <path d="M6 5H24V28H6Z" />
      <path d="M1 1H19V23H1Z" />
    </g>
  )
  const details = (
    <>
      {['#70b020', '#f03020', '#30b0f0', '#60c890', '#f8c820'].map((c, i) => (
        <path key={c} d={`M2 ${4 + i * 8}H7M22 ${4 + i * 8}H27`} stroke={c} strokeWidth="4" />
      ))}
      <path d="M9 4H18M9 12H18M9 20H18M9 28H18M9 36H18M29 4H38M29 12H38M29 20H38M29 28H38M29 36H38" stroke="#7aa8f0" strokeWidth="4" />
    </>
  )
  return (
    <section
      role="dialog"
      aria-labelledby="dialog-title"
      className="absolute left-[350px] top-[74px] flex w-[1344px] flex-col border-2 border-[#4d565e] bg-[repeating-linear-gradient(135deg,#d7e5ee_0px,#d7e5ee_3px,#dfeaf2_4px,#d7e5ee_5px)] shadow-[0_6px_24px_rgba(0,0,0,0.45)]"
    >
      <div className="flex h-[60px] items-center bg-white pl-4 pr-[22px] pb-0.5 text-black">
        <Icon className="size-7">{captionCube}</Icon>
        <h2 id="dialog-title" className="ml-[9px] flex-1 text-2xl">保存副本</h2>
        <button type="button" aria-label="关闭">
          <svg viewBox="0 0 20 20" fill="none" stroke="#000" strokeWidth="2" className="size-5"><path d="M0 0L20 20M20 0L0 20" /></svg>
        </button>
      </div>

      <div className="flex h-[74px] items-center pl-2.5 pr-1.5 pt-4 font-['Liberation_Mono','Noto_Sans_CJK_SC',monospace] text-xl text-[#667487]">
        <button type="button" aria-label="后退和前进">
          <svg viewBox="0 0 112 56" className="h-14 w-28" aria-hidden="true">
            <defs>
              <linearGradient id="orb" x1="0" x2="0" y1="0" y2="1">
                <stop offset="0" stopColor="#f4f6fa" />
                <stop offset="0.5" stopColor="#cdd6e2" />
                <stop offset="0.5" stopColor="#aebccb" />
                <stop offset="1" stopColor="#dcf6ff" />
              </linearGradient>
            </defs>
            <path d="M28 1Q40 1 48 7H64Q72 1 84 1A27 27 0 0 1 84 55Q72 54 64 48H48Q40 54 28 55A27 27 0 0 1 28 1Z" fill="#d0d9df" stroke="#a8afb5" strokeWidth="2" />
            <circle cx="27" cy="28" r="23" fill="url(#orb)" stroke="#8494a4" strokeWidth="2" />
            <circle cx="85" cy="28" r="23" fill="url(#orb)" stroke="#8494a4" strokeWidth="2" />
            <path d="M42 28H16M28 16L15 28L28 40M70 28H96M84 16L97 28L84 40" fill="none" stroke="#fff" strokeWidth="6" />
          </svg>
        </button>
        <button type="button" aria-label="历史" className="mx-2"><Caret color="#000" /></button>
        <div className="ml-1.5 flex h-[49px] flex-1 items-center border-2 border-[#a9d3ef] border-t-[#7aa2ba] bg-white pl-2">
          <Icon className="size-8">{folder}</Icon>
          <svg viewBox="0 0 18 12" className="ml-3 mr-[10px] h-3 w-[18px]" aria-hidden="true"><path d="M8 1L2 6L8 11M16 1L10 6L16 11" fill="none" stroke="#000" strokeWidth="3" /></svg>
          {crumbs.map((crumb, i) => (
            <span key={crumb} className="flex items-center">
              {i > 0 && arrow}
              <button type="button" className={i === crumbs.length - 1 ? 'text-2xl text-[#051a22]' : ''}>{crumb}</button>
            </span>
          ))}
          <button type="button" aria-label="路径列表" className="ml-auto mr-2"><Caret color="#051a22" /></button>
          <button type="button" aria-label="刷新" className="flex h-full w-[42px] items-center justify-center border-l-2 border-[#666] pr-1">
            <Icon className="size-8">
              <path d="M18 4Q9 5 11 18" stroke="#28a8d8" strokeWidth="3" />
              <path d="M2 16H20L11 28Z" fill="#2f78c8" />
              <path d="M22 37Q31 35 30 24" stroke="#1c3f88" strokeWidth="3" />
              <path d="M20 25H39L30 13Z" fill="#2f6fc0" />
            </Icon>
          </button>
        </div>
        <input aria-label="搜索" placeholder="搜索..." className="ml-4 h-[49px] w-[164px] border-2 border-[#a9d3ef] border-t-[#7aa2ba] bg-white pl-2 text-2xl placeholder:text-[#3a444c]" />
      </div>

      <div className="ml-2 mr-1.5 flex h-[52px] items-center bg-linear-to-b from-[#8a8c8c] from-0% via-[#4c4e4f] via-46% to-[#1a1c1e] to-50% pl-2.5 pr-2 text-2xl text-white">
        {[{ name: '组织', icon: stack }, { name: '视图', icon: details }, { name: '工具', icon: hammer }].map((item) => (
          <button key={item.name} type="button" className="mr-[13px] flex items-center">
            <Icon className="size-8">{item.icon}</Icon>
            <span className="ml-2.5">{item.name}</span>
            <svg viewBox="0 0 16 10" className="ml-2.5 h-2.5 w-4" aria-hidden="true"><path d="M1 1L8 8L15 1" fill="none" stroke="#fff" strokeWidth="3" /></svg>
          </button>
        ))}
        <button type="button" aria-label="上下文帮助" className="ml-auto"><Icon className="size-9">{helpPointer('#111', '#bbb', '#b838cc')}</Icon></button>
      </div>

      <div className="mx-2 mt-1 flex h-[642px]">
        <div className="flex w-[244px] flex-col bg-[#cfdfea] text-2xl text-[#051a22]">
          <h3 className="h-9 bg-linear-to-r from-white to-[#cfdfea] to-50% pl-2 pt-0.5 leading-9 text-[#3a444c]">公用文件夹</h3>
          <ul className="mr-2 flex-1 bg-white">
            {places.map((place) => (
              <li key={place.name} className="h-12">
                <button type="button" className="flex h-full items-center gap-[7px] pl-2">
                  <Icon className="size-8">{place.icon}</Icon>
                  <span className={place.mono ? "pt-1 font-['Liberation_Mono',monospace] text-xl text-[#667487]" : ''}>{place.name}</span>
                </button>
              </li>
            ))}
          </ul>
          <button type="button" className="flex h-[50px] items-center bg-linear-to-r from-white to-[#cfdfea] to-50% pl-4 pt-1.5 font-bold">
            <svg viewBox="0 0 8 14" className="mr-2 h-[14px] w-2" aria-hidden="true"><path d="M0 0L8 6V8L0 14Z" fill="#000" /></svg>
            文件夹树
          </button>
        </div>
        <div className="flex-1 bg-white" />
      </div>

      <form className="pl-5 pr-2 font-['Liberation_Mono','Noto_Sans_CJK_SC',monospace] text-xl text-[#667487]" onSubmit={(e) => e.preventDefault()}>
        <div className="mt-1 flex h-11 items-center">
          <label htmlFor="model-name" className="w-[108px] pt-1 text-2xl text-[#37414a]">模型名称</label>
          <input id="model-name" disabled value="PRT0001.PRT" className="h-10 flex-1 rounded-md border-2 border-[#b5bfc3] bg-white pl-1.5 text-[#bfc6cc]" />
          <button type="button" aria-label="选取模型" disabled className="ml-1.5 flex size-11 items-center justify-center rounded-md border-2 border-[#b3bdc3]">
            <Icon className="size-8">
              <path d="M12 1V9M12 15V21M2 11H9M15 11H21" stroke="#7a868d" strokeWidth="3" />
              <path d="M20 14H30V28H36L25 39L14 28H20Z" fill="#7f8b90" />
            </Icon>
          </button>
        </div>
        <div className="mt-1.5 flex h-10 items-center">
          <label htmlFor="new-name" className="w-[108px] pt-1 text-2xl text-[#37414a]">新名称</label>
          <input id="new-name" value={newName} onChange={(e) => setNewName(e.target.value)} className="h-10 flex-1 rounded-md border-2 border-[#7bb8d8] border-t-[#7aa2ba] bg-white pl-1.5" />
        </div>
        <div className="mt-[14px] flex h-10 items-center">
          <label htmlFor="file-type" className="w-[108px] pt-1 text-2xl text-[#37414a]">类型</label>
          <Dropdown id="file-type" value="STL (*.stl)" className="h-10 flex-1" />
        </div>
      </form>

      <div className="mt-8 h-1 border-b-2 border-[#f5f9fc] bg-[#c0cfd9]" />
      <div className="flex h-[104px] items-center justify-around px-6 pt-1 text-2xl text-[#051a22]">
        <button type="button" className="h-10 w-28 rounded-md border-[3px] border-[#7aa5bf] bg-linear-to-b from-white from-20% to-[#9fd2f8] leading-8 outline-2 outline-[#f2f9fd]">确定</button>
        <button type="button" className="h-10 w-28 rounded-md border-2 border-[#7aa2ba] bg-linear-to-b from-white from-30% to-[#cfe4f4] leading-8">取消</button>
      </div>
    </section>
  )
}

function FeatureToolbar() {
  return (
    <aside className="flex w-[73px] shrink-0 flex-col bg-[#dce9f2]">
      {sideGroups.map((group, i) => (
        <div key={i} className="flex flex-col">
          <Grip horizontal />
          {group.map((tool) => (
            <div key={tool.id} className="flex h-14 items-center">
              <ToolButton tool={tool} />
              {tool.id === 'point' && (
                <svg viewBox="0 0 8 12" className="ml-2 h-3 w-2 shrink-0" aria-hidden="true"><path d="M0 0L8 6L0 12Z" fill="#2f3b44" /></svg>
              )}
            </div>
          ))}
        </div>
      ))}
    </aside>
  )
}

export default function App() {
  return (
    <div className="flex min-h-screen flex-col overflow-hidden bg-[#dce9f2] font-['Open_Sans','Noto_Sans_CJK_SC',sans-serif] text-[#2f3b44]">
      <TitleBar />
      <nav className="flex h-[58px] shrink-0 items-center gap-[31px] bg-linear-to-b from-[#f1f9fd] to-[#e6eef4] pl-0.5 pt-3 text-2xl leading-8">
        {menus.map((menu) => <button key={menu} type="button">{menu}</button>)}
      </nav>
      <Rule />
      <MainToolbar />
      <Rule />
      <MessageArea />
      <div className="h-1 shrink-0 border-t-2 border-[#f6fafd] bg-[#c2d2de]" />
      <div className="flex flex-1">
        <ModelTree />
        <main className="relative flex-1 overflow-hidden bg-linear-to-b from-[#c5dbea] via-[#9fb8d4] via-50% to-[#5a7aa9]">
          <Model />
          <SaveCopyDialog />
        </main>
        <FeatureToolbar />
      </div>
    </div>
  )
}
